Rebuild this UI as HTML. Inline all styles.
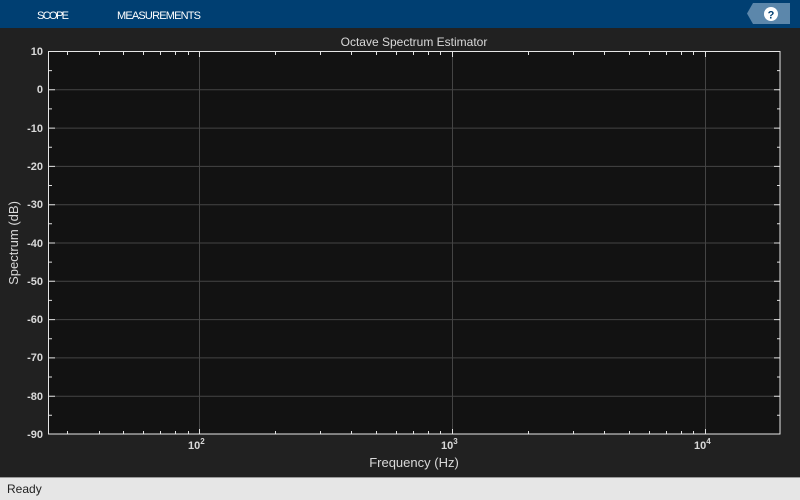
<!DOCTYPE html><html><head><style>
body{margin:0;width:800px;height:500px;overflow:hidden;background:#212121;font-family:"Liberation Sans",sans-serif}
</style></head><body>
<svg width="800" height="500" xmlns="http://www.w3.org/2000/svg" style="position:absolute;left:0;top:0">
<rect x="0" y="0" width="800" height="28" fill="#003f72"/>
<text x="37" y="19" fill="#fff" font-size="11" textLength="32">SCOPE</text>
<text x="117" y="19" fill="#fff" font-size="11" textLength="84">MEASUREMENTS</text>
<polygon points="753,3 790,3 790,24 753,24 747,13.5" fill="#5c87ab"/>
<circle cx="771" cy="14" r="7" fill="#fff"/>
<text x="771" y="18.5" fill="#003f72" font-size="11" font-weight="bold" text-anchor="middle">?</text>
<rect x="0" y="28" width="800" height="449" fill="#212121"/>
<text x="414" y="46" fill="#d9d9d9" font-size="12" text-anchor="middle">Octave Spectrum Estimator</text>
<rect x="48.5" y="51.5" width="731.5" height="382.5" fill="#121212"/>
<g stroke="#444" stroke-width="1">
<line x1="49" x2="780" y1="89.8" y2="89.8"/><line x1="49" x2="780" y1="128.1" y2="128.1"/><line x1="49" x2="780" y1="166.4" y2="166.4"/><line x1="49" x2="780" y1="204.7" y2="204.7"/><line x1="49" x2="780" y1="243" y2="243"/><line x1="49" x2="780" y1="281.3" y2="281.3"/><line x1="49" x2="780" y1="319.6" y2="319.6"/><line x1="49" x2="780" y1="357.9" y2="357.9"/><line x1="49" x2="780" y1="396.2" y2="396.2"/>
<line x1="199.5" x2="199.5" y1="52" y2="434"/><line x1="452.5" x2="452.5" y1="52" y2="434"/><line x1="705.5" x2="705.5" y1="52" y2="434"/>
</g>
<g stroke="#e0e0e0" stroke-width="1">
<path d="M67.5,434v-3M99.5,434v-3M123.5,434v-3M143.5,434v-3M160.5,434v-3M175.5,434v-3M188.5,434v-3M199.5,434v-5M275.5,434v-3M320.5,434v-3M351.5,434v-3M376.5,434v-3M396.5,434v-3M413.5,434v-3M428.5,434v-3M440.5,434v-3M452.5,434v-5M528.5,434v-3M573.5,434v-3M604.5,434v-3M629.5,434v-3M649.5,434v-3M666.5,434v-3M681.5,434v-3M693.5,434v-3M705.5,434v-5"/>
<path d="M67.5,52v3M99.5,52v3M123.5,52v3M143.5,52v3M160.5,52v3M175.5,52v3M188.5,52v3M199.5,52v5M275.5,52v3M320.5,52v3M351.5,52v3M376.5,52v3M396.5,52v3M413.5,52v3M428.5,52v3M440.5,52v3M452.5,52v5M528.5,52v3M573.5,52v3M604.5,52v3M629.5,52v3M649.5,52v3M666.5,52v3M681.5,52v3M693.5,52v3M705.5,52v5"/>
<path d="M49,89.8h6M49,128.1h6M49,166.4h6M49,204.7h6M49,243h6M49,281.3h6M49,319.6h6M49,357.9h6M49,396.2h6M49,70.6h3M49,108.9h3M49,147.2h3M49,185.5h3M49,223.8h3M49,262.1h3M49,300.4h3M49,338.7h3M49,377h3M49,415.3h3"/>
<path d="M780,89.8h-6M780,128.1h-6M780,166.4h-6M780,204.7h-6M780,243h-6M780,281.3h-6M780,319.6h-6M780,357.9h-6M780,396.2h-6M780,70.6h-3M780,108.9h-3M780,147.2h-3M780,185.5h-3M780,223.8h-3M780,262.1h-3M780,300.4h-3M780,338.7h-3M780,377h-3M780,415.3h-3"/>
</g>
<rect x="48.5" y="51.5" width="731.5" height="382.5" fill="none" stroke="#e6e6e6"/>
<g fill="#d9d9d9" font-size="11" font-weight="bold" text-anchor="end">
<text x="43" y="55">10</text><text x="43" y="93">0</text><text x="43" y="132">-10</text><text x="43" y="170">-20</text><text x="43" y="208">-30</text><text x="43" y="247">-40</text><text x="43" y="285">-50</text><text x="43" y="323">-60</text><text x="43" y="361">-70</text><text x="43" y="400">-80</text><text x="43" y="438">-90</text>
</g>
<g fill="#d9d9d9" font-size="11" font-weight="bold">
<text x="188" y="449">10<tspan font-size="8" dy="-5">2</tspan></text>
<text x="441" y="449">10<tspan font-size="8" dy="-5">3</tspan></text>
<text x="694" y="449">10<tspan font-size="8" dy="-5">4</tspan></text>
</g>
<text x="414" y="467" fill="#d9d9d9" font-size="13" text-anchor="middle">Frequency (Hz)</text>
<text transform="translate(18,243) rotate(-90)" fill="#d9d9d9" font-size="13" text-anchor="middle">Spectrum (dB)</text>
<rect x="0" y="477" width="800" height="23" fill="#e6e6e6"/>
<line x1="0" x2="800" y1="477.5" y2="477.5" stroke="#9a9a9a"/>
<text x="7" y="493" fill="#222" font-size="12">Ready</text>
</svg>
</body></html>
